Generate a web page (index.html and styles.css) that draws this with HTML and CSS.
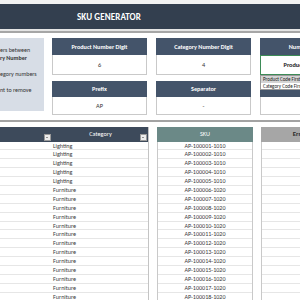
FILE: index.html
```html
<!DOCTYPE html>
<html>
<head>
<meta charset="utf-8">
<link rel="stylesheet" href="styles.css">
</head>
<body>
<div class="sheet">
  <div class="topstrip"></div>
  <div class="titlebar"><span class="title">SKU GENERATOR</span></div>
  <div class="rule rule-top"></div>
  <div class="panel">
    <div class="note">
      <p>ers between</p>
      <p><b>ry Number</b></p>
      <p>&nbsp;</p>
      <p>egory numbers</p>
      <p>&nbsp;</p>
      <p>nt to remove</p>
    </div>
    <div class="boxes">
      <div class="box"><div class="bh">Product Number Digit</div><div class="bv">6</div></div>
      <div class="box"><div class="bh">Category Number Digit</div><div class="bv">4</div></div>
      <div class="box sel"><div class="bh">Number Order</div><div class="bv"><b>Product Code First</b></div>
        <ul class="dropdown"><li class="hi">Product Code First</li><li>Category Code First</li></ul>
      </div>
      <div class="box row2"><div class="bh">Prefix</div><div class="bv">AP</div></div>
      <div class="box row2"><div class="bh">Separator</div><div class="bv">-</div></div>
      <div class="box row2"><div class="bh"></div><div class="bv"></div></div>
    </div>
  </div>
  <div class="rule rule-mid"></div>
  <div class="table">
    <div class="tsec left">
      <div class="th"><div class="c0"><span class="flt"></span></div><div class="c1">Category<span class="flt"></span></div></div>
      <div class="tr"><div class="c0"></div><div class="c1">Lighting</div></div>
      <div class="tr"><div class="c0"></div><div class="c1">Lighting</div></div>
      <div class="tr"><div class="c0"></div><div class="c1">Lighting</div></div>
      <div class="tr"><div class="c0"></div><div class="c1">Lighting</div></div>
      <div class="tr"><div class="c0"></div><div class="c1">Lighting</div></div>
      <div class="tr"><div class="c0"></div><div class="c1">Furniture</div></div>
      <div class="tr"><div class="c0"></div><div class="c1">Furniture</div></div>
      <div class="tr"><div class="c0"></div><div class="c1">Furniture</div></div>
      <div class="tr"><div class="c0"></div><div class="c1">Furniture</div></div>
      <div class="tr"><div class="c0"></div><div class="c1">Furniture</div></div>
      <div class="tr"><div class="c0"></div><div class="c1">Furniture</div></div>
      <div class="tr"><div class="c0"></div><div class="c1">Furniture</div></div>
      <div class="tr"><div class="c0"></div><div class="c1">Furniture</div></div>
      <div class="tr"><div class="c0"></div><div class="c1">Furniture</div></div>
      <div class="tr"><div class="c0"></div><div class="c1">Furniture</div></div>
      <div class="tr"><div class="c0"></div><div class="c1">Furniture</div></div>
      <div class="tr"><div class="c0"></div><div class="c1">Furniture</div></div>
      <div class="tr"><div class="c0"></div><div class="c1">Furniture</div></div>
    </div>
    <div class="tsec sku">
      <div class="th">SKU</div>
      <div class="tr">AP-100001-1010</div>
      <div class="tr">AP-100002-1010</div>
      <div class="tr">AP-100003-1010</div>
      <div class="tr">AP-100004-1010</div>
      <div class="tr">AP-100005-1010</div>
      <div class="tr">AP-100006-1020</div>
      <div class="tr">AP-100007-1020</div>
      <div class="tr">AP-100008-1020</div>
      <div class="tr">AP-100009-1020</div>
      <div class="tr">AP-100010-1020</div>
      <div class="tr">AP-100011-1020</div>
      <div class="tr">AP-100012-1020</div>
      <div class="tr">AP-100013-1020</div>
      <div class="tr">AP-100014-1020</div>
      <div class="tr">AP-100015-1020</div>
      <div class="tr">AP-100016-1020</div>
      <div class="tr">AP-100017-1020</div>
      <div class="tr">AP-100018-1020</div>
    </div>
    <div class="tsec err">
      <div class="th">Error Check</div>
      <div class="tr"></div><div class="tr"></div><div class="tr"></div><div class="tr"></div>
      <div class="tr"></div><div class="tr"></div><div class="tr"></div><div class="tr"></div>
      <div class="tr"></div><div class="tr"></div><div class="tr"></div><div class="tr"></div>
      <div class="tr"></div><div class="tr"></div><div class="tr"></div><div class="tr"></div>
      <div class="tr"></div><div class="tr"></div>
    </div>
  </div>
</div>
</body>
</html>
```

FILE: styles.css
```css
html, body {
  margin: 0;
  padding: 0;
  background: #ffffff;
}
.sheet {
  width: 300px;
  height: 300px;
  overflow: hidden;
  font-family: Carlito, Lato, "Open Sans", sans-serif;
  color: #333333;
}
.topstrip {
  height: 4px;
  background: #f2f2f2;
}
.titlebar {
  height: 25px;
  background: #333f4f;
  border-bottom: 2px solid #e4e4e4;
  display: flex;
  align-items: center;
  padding-left: 77px;
}
.title {
  color: #ffffff;
  font-weight: 700;
  font-size: 9px;
  letter-spacing: 0.1px;
}
.rule {
  height: 2px;
  background: #a6a6a6;
}
.rule-top {
  margin-bottom: 5px;
}
.rule-mid {
  margin-top: 5px;
  margin-bottom: 5px;
  height: 2px;
  background: #a3a3a3;
}
.panel {
  display: flex;
  gap: 8px;
  height: 77px;
  overflow: visible;
}
.note {
  width: 44px;
  flex: none;
  height: 73px;
  background: #d7dde6;
  padding-top: 8px;
  box-sizing: border-box;
  font-size: 6px;
  color: #333;
  white-space: nowrap;
  overflow: hidden;
}
.note p {
  margin: 0;
  height: 8px;
  line-height: 8px;
}
.boxes {
  display: grid;
  grid-template-columns: repeat(3, 95px);
  grid-template-rows: 37px 34px;
  column-gap: 9px;
  row-gap: 6px;
  flex: none;
}
.box {
  display: flex;
  flex-direction: column;
  position: relative;
}
.bh {
  height: 17px;
  background: #44546a;
  color: #ffffff;
  font-weight: 700;
  font-size: 6.2px;
  display: flex;
  align-items: center;
  justify-content: center;
  white-space: nowrap;
}
.bv {
  flex: 1;
  background: #ffffff;
  border: 1px solid #c9c9c9;
  border-top: none;
  display: flex;
  align-items: center;
  justify-content: center;
  font-size: 6.3px;
  color: #333;
  white-space: nowrap;
}
.row2 .bh {
  height: 16px;
}
.sel .bv {
  border: 1.5px solid #3d8b57;
  color: #222;
}
.dropdown {
  position: absolute;
  left: 0;
  top: 37px;
  width: 95px;
  margin: 0;
  padding: 0;
  list-style: none;
  background: #ffffff;
  border: 1px solid #9a9a9a;
  z-index: 2;
  font-size: 5px;
  color: #222;
}
.dropdown li {
  height: 6.5px;
  line-height: 6.5px;
  padding-left: 2px;
  white-space: nowrap;
}
.dropdown li.hi {
  background: #d4d4d4;
}
.table {
  display: flex;
  gap: 8px;
}
.tsec {
  flex: none;
  display: flex;
  flex-direction: column;
}
.th {
  height: 14.5px;
  display: flex;
  align-items: center;
  justify-content: center;
  font-size: 6.2px;
  color: #ffffff;
  white-space: nowrap;
}
.tr {
  height: 8.9px;
  box-sizing: border-box;
  border-bottom: 1px solid #e6e6e6;
  font-size: 6.1px;
  line-height: 8px;
  white-space: nowrap;
  color: #3a3a3a;
}
.left {
  width: 148px;
  border-right: 1px solid #c4c4c4;
}
.left .th {
  background: #3d4a5b;
  justify-content: flex-start;
}
.left .th .c0, .left .th .c1 {
  position: relative;
  height: 100%;
  display: flex;
  align-items: center;
  justify-content: center;
}
.left .tr {
  display: flex;
}
.c0 {
  width: 52px;
}
.c1 {
  width: 95px;
  padding-left: 1px;
}
.left .tr .c1 {
  padding-left: 1px;
  box-sizing: border-box;
}
.flt {
  position: absolute;
  right: 1px;
  bottom: 1px;
  width: 5px;
  height: 5px;
  background: #ececec;
  border: 0.5px solid #9a9a9a;
}
.flt::after {
  content: "";
  position: absolute;
  left: 1px;
  top: 2px;
  border-left: 1.5px solid transparent;
  border-right: 1.5px solid transparent;
  border-top: 1.5px solid #333;
}
.sku {
  width: 96px;
  border-left: 1px solid #c9c9c9;
  border-right: 1px solid #c9c9c9;
  box-sizing: border-box;
}
.sku .th {
  background: #6b8987;
  margin: 0 -1px;
}
.sku .tr {
  text-align: center;
}
.err {
  width: 95px;
  border-left: 1px solid #c9c9c9;
}
.err .th {
  background: #a6a6a6;
  color: #2a2a2a;
  font-weight: 700;
  font-size: 6.8px;
  margin-left: -1px;
}
```
